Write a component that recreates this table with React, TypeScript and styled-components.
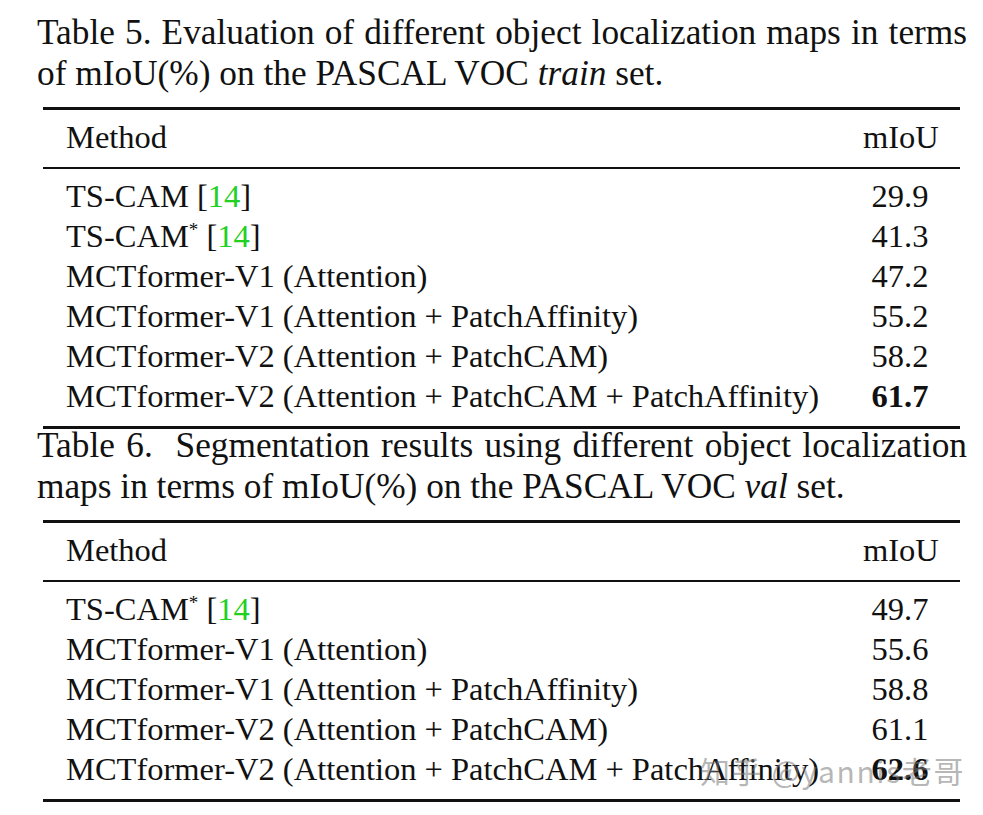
import React from "react";
import styled, { createGlobalStyle } from "styled-components";

const Global = createGlobalStyle`
  html, body { margin: 0; padding: 0; background: #ffffff; }
  body { font-family: "Liberation Serif", "Times New Roman", serif; color: #111; }
`;

const Page = styled.div`
  position: relative;
  width: 983px;
  height: 815px;
  overflow: hidden;
  padding: 12px 0 0 37px;
  box-sizing: border-box;
`;

const Section = styled.section<{ $gapTop?: number }>`
  width: 930px;
  margin-top: ${(p) => p.$gapTop ?? 0}px;
`;

const Caption = styled.div`
  font-size: 35.3px;
  line-height: 41px;
  color: #111;
`;

const CaptionLine = styled.div<{ $justify?: boolean }>`
  white-space: nowrap;
  text-align: ${(p) => (p.$justify ? "justify" : "left")};
  text-align-last: ${(p) => (p.$justify ? "justify" : "left")};
  ${(p) => (p.$justify ? "white-space: normal;" : "")}
`;

const Table = styled.div`
  width: 917px;
  margin: 13px 0 0 6px;
  font-size: 32.5px;
  line-height: 40px;
  color: #111;
`;

const Rule = styled.div<{ $thick?: boolean }>`
  height: ${(p) => (p.$thick ? 3 : 2)}px;
  background: #111;
`;

const Head = styled.div`
  display: grid;
  grid-template-columns: 1fr 74px;
  padding: 7px 23px 10px;
`;

const Body = styled.div`
  display: grid;
  grid-template-columns: 1fr 74px;
  padding: 7px 23px 10px;
`;

const Cell = styled.div<{ $num?: boolean; $bold?: boolean }>`
  white-space: nowrap;
  text-align: ${(p) => (p.$num ? "center" : "left")};
  font-weight: ${(p) => (p.$bold ? 700 : 400)};
`;

const Ref = styled.span`
  color: #22d022;
`;

const Sup = styled.sup`
  font-size: 19px;
  line-height: 0;
  vertical-align: 11px;
`;

const Watermark = styled.div`
  position: absolute;
  left: 700px;
  top: 750px;
  font-family: "Noto Sans CJK SC", "Noto Sans", sans-serif;
  font-size: 30px;
  line-height: 40px;
  color: rgba(120, 120, 120, 0.55);
  white-space: nowrap;
  letter-spacing: 1.6px;
`;

type Row = { method: React.ReactNode; value: string; bold?: boolean };

const tsCam = (
  <>
    TS-CAM [<Ref>14</Ref>]
  </>
);
const tsCamStar = (
  <>
    TS-CAM<Sup>*</Sup> [<Ref>14</Ref>]
  </>
);

const rows5: Row[] = [
  { method: tsCam, value: "29.9" },
  { method: tsCamStar, value: "41.3" },
  { method: "MCTformer-V1 (Attention)", value: "47.2" },
  { method: "MCTformer-V1 (Attention + PatchAffinity)", value: "55.2" },
  { method: "MCTformer-V2 (Attention + PatchCAM)", value: "58.2" },
  { method: "MCTformer-V2 (Attention + PatchCAM + PatchAffinity)", value: "61.7", bold: true },
];

const rows6: Row[] = [
  { method: tsCamStar, value: "49.7" },
  { method: "MCTformer-V1 (Attention)", value: "55.6" },
  { method: "MCTformer-V1 (Attention + PatchAffinity)", value: "58.8" },
  { method: "MCTformer-V2 (Attention + PatchCAM)", value: "61.1" },
  { method: "MCTformer-V2 (Attention + PatchCAM + PatchAffinity)", value: "62.6", bold: true },
];

function ResultTable({ rows }: { rows: Row[] }) {
  return (
    <Table>
      <Rule $thick />
      <Head>
        <Cell>Method</Cell>
        <Cell $num>mIoU</Cell>
      </Head>
      <Rule />
      <Body>
        {rows.map((r, i) => (
          <React.Fragment key={i}>
            <Cell>{r.method}</Cell>
            <Cell $num $bold={r.bold}>
              {r.value}
            </Cell>
          </React.Fragment>
        ))}
      </Body>
      <Rule $thick />
    </Table>
  );
}

export default function App() {
  return (
    <>
      <Global />
      <Page>
        <Section>
          <Caption>
            <CaptionLine $justify>
              Table 5. Evaluation of different object localization maps in terms
            </CaptionLine>
            <CaptionLine>
              of mIoU(%) on the PASCAL VOC <i>train</i> set.
            </CaptionLine>
          </Caption>
          <ResultTable rows={rows5} />
        </Section>
        <Section $gapTop={-4}>
          <Caption>
            <CaptionLine $justify>
              Table 6.&nbsp; Segmentation results using different object localization
            </CaptionLine>
            <CaptionLine>
              maps in terms of mIoU(%) on the PASCAL VOC <i>val</i> set.
            </CaptionLine>
          </Caption>
          <ResultTable rows={rows6} />
        </Section>
        <Watermark>知乎 @yannis老哥</Watermark>
      </Page>
    </>
  );
}
